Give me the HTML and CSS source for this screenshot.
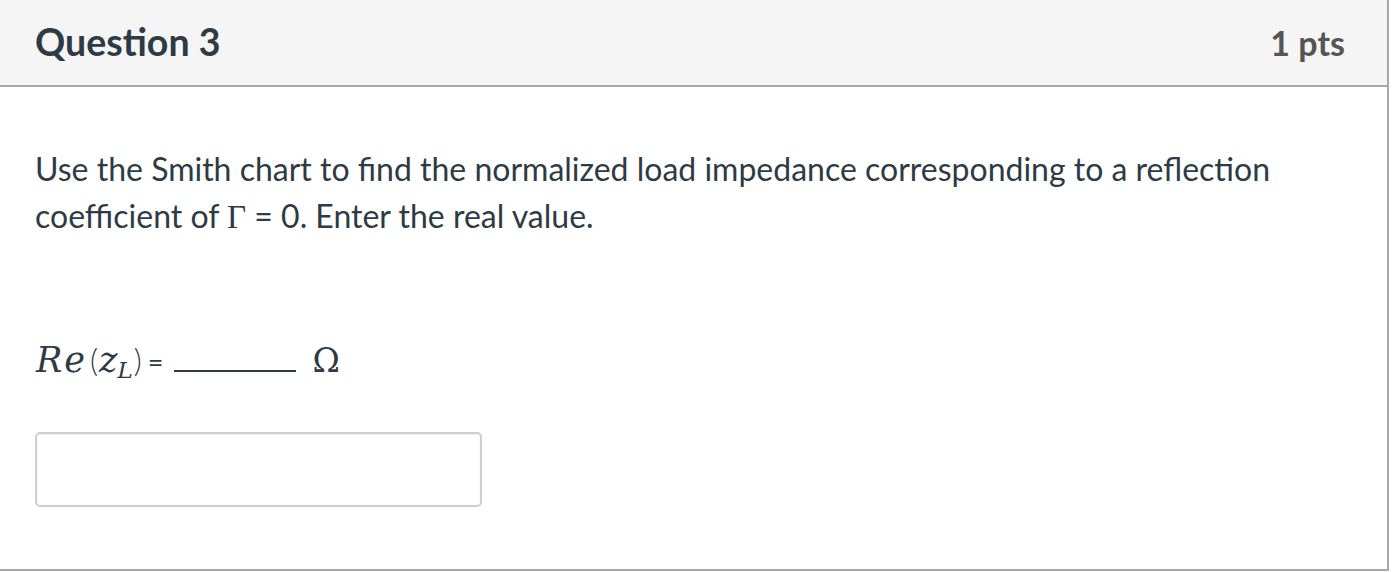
FILE: index.html
```html
<!DOCTYPE html>
<html>
<head>
<meta charset="utf-8">
<link rel="stylesheet" href="styles.css">
</head>
<body>
<div class="card">
  <div class="header">
    <span class="title">Question 3</span>
    <span class="pts">1 pts</span>
  </div>
  <div class="content">
    <p class="text">Use the Smith chart to find the normalized load impedance corresponding to a reflection coefficient of <span class="gamma">Γ</span> = 0. Enter the real value.</p>
    <div class="math"><span class="mi r">R</span><span class="mi e">e</span><span class="paren">(</span><span class="mi z">z</span><span class="sub">L</span><span class="paren">)</span><span class="eq">=</span><span class="blank"></span><span class="omega">Ω</span></div>
    <div class="answer"></div>
  </div>
</div>
</body>
</html>
```

FILE: styles.css
```css
html, body {
  margin: 0;
  padding: 0;
  background: #fff;
}
body {
  font-family: Lato, "Open Sans", sans-serif;
  color: #2d3b45;
}
.card {
  box-sizing: border-box;
  width: 1389px;
  height: 571px;
  border-right: 2px solid #a8a8a8;
  border-bottom: 2px solid #a8a8a8;
  display: flex;
  flex-direction: column;
}
.header {
  box-sizing: border-box;
  height: 87px;
  background: #f5f5f5;
  border-bottom: 2px solid #a8a8a8;
  display: flex;
  align-items: baseline;
  justify-content: space-between;
  padding: 19px 42px 0 35px;
}
.title {
  font-size: 37.5px;
  line-height: 46px;
  font-weight: 700;
  color: #2d3b45;
}
.pts {
  font-size: 34px;
  line-height: 46px;
  font-weight: 700;
  color: #555;
}
.content {
  padding: 58px 35px 0 35px;
}
.text {
  margin: 0;
  font-size: 32px;
  line-height: 47px;
}
.gamma {
  font-family: "Liberation Serif", "DejaVu Serif", serif;
  font-size: 33px;
  line-height: 1;
}
.math {
  margin: 101px 0 0 1px;
  height: 47px;
  display: flex;
  align-items: baseline;
  font-size: 27px;
}
.mi {
  font-family: "DejaVu Serif", "Liberation Serif", serif;
  font-style: italic;
  font-size: 35px;
}
.r {
  margin-right: 2px;
}
.e {
  margin-right: 5px;
}
.paren {
  font-family: Lato, sans-serif;
  font-size: 31px;
  font-weight: 300;
}
.z {
  margin-left: 1px;
}
.sub {
  font-family: "DejaVu Serif", "Liberation Serif", serif;
  font-style: italic;
  font-size: 23px;
  position: relative;
  top: 6px;
  margin-right: 1px;
}
.eq {
  margin: 0 11px 0 6px;
  font-size: 27px;
}
.blank {
  display: inline-block;
  width: 122px;
  height: 2px;
  background: #2d3b45;
  margin-right: 16px;
}
.omega {
  font-family: "DejaVu Serif", "Liberation Serif", serif;
  font-size: 33px;
}
.answer {
  box-sizing: border-box;
  margin-top: 45px;
  width: 447px;
  height: 75px;
  border: 2px solid #cfcfcf;
  border-radius: 5px;
  box-shadow: inset 0 1px 2px rgba(0,0,0,0.08);
  background: #fff;
}
```
